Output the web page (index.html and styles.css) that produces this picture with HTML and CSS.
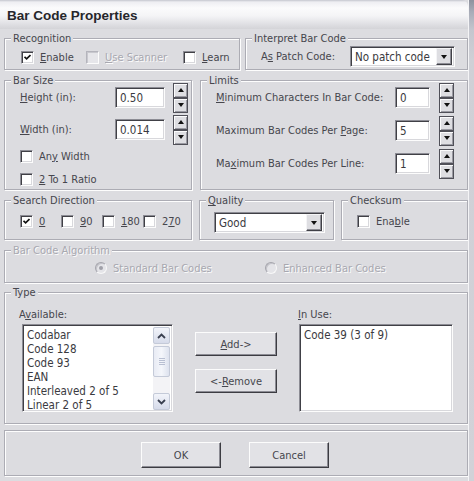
FILE: index.html
```html
<!DOCTYPE html>
<html>
<head>
<meta charset="utf-8">
<title>Bar Code Properties</title>
<link rel="stylesheet" href="styles.css">
</head>
<body>
<div class="window">
  <div class="main">
    <div class="titlebar"><span class="title">Bar Code Properties</span></div>
    <div class="client">

      <div class="row row1">
        <fieldset class="grp g-recog">
          <legend>Recognition</legend>
          <div class="body recog-body">
            <div class="chk w-enable"><span class="box"><svg viewBox="0 0 7 7" class="tick"><path d="M0.5 2.8 L2.6 4.9 L6.5 1"/></svg></span><span><u>E</u>nable</span></div>
            <div class="chk w-scan dis"><span class="box"></span><span class="dtext"><u>U</u>se Scanner</span></div>
            <div class="chk"><span class="box"></span><span><u>L</u>earn</span></div>
          </div>
        </fieldset>
        <fieldset class="grp g-interp">
          <legend>Interpret Bar Code</legend>
          <div class="body interp-body">
            <span class="flabel w-patch">A<u>s</u> Patch Code:</span>
            <div class="combo w-patchsel"><span class="ctext">No patch code</span><span class="dropbtn"></span></div>
          </div>
        </fieldset>
      </div>

      <div class="row row2">
        <fieldset class="grp g-barsize">
          <legend>Bar Size</legend>
          <div class="body barsize-body">
            <div class="frow">
              <span class="flabel w-bs"><u>H</u>eight (in):</span>
              <div class="edit w-bsedit">0.50</div>
              <div class="spin"><span class="sb up"></span><span class="sb dn"></span></div>
            </div>
            <div class="frow">
              <span class="flabel w-bs"><u>W</u>idth (in):</span>
              <div class="edit w-bsedit">0.014</div>
              <div class="spin"><span class="sb up"></span><span class="sb dn"></span></div>
            </div>
            <div class="chk crow first"><span class="box"></span><span>An<u>y</u> Width</span></div>
            <div class="chk crow"><span class="box"></span><span><u>2</u> To 1 Ratio</span></div>
          </div>
        </fieldset>
        <fieldset class="grp g-limits">
          <legend>Limits</legend>
          <div class="body limits-body">
            <div class="frow">
              <span class="flabel w-lim"><u>M</u>inimum Characters In Bar Code:</span>
              <div class="edit w-limedit">0</div>
              <div class="spin"><span class="sb up"></span><span class="sb dn"></span></div>
            </div>
            <div class="frow">
              <span class="flabel w-lim">Maximum Bar Codes Per <u>P</u>age:</span>
              <div class="edit w-limedit">5</div>
              <div class="spin"><span class="sb up"></span><span class="sb dn"></span></div>
            </div>
            <div class="frow">
              <span class="flabel w-lim">Ma<u>x</u>imum Bar Codes Per Line:</span>
              <div class="edit w-limedit">1</div>
              <div class="spin"><span class="sb up"></span><span class="sb dn"></span></div>
            </div>
          </div>
        </fieldset>
      </div>

      <div class="row row3">
        <fieldset class="grp g-search">
          <legend>Search Direction</legend>
          <div class="body search-body">
            <div class="chk w-dir"><span class="box"><svg viewBox="0 0 7 7" class="tick"><path d="M0.5 2.8 L2.6 4.9 L6.5 1"/></svg></span><span><u>0</u></span></div>
            <div class="chk w-dir"><span class="box"></span><span><u>9</u>0</span></div>
            <div class="chk w-dir"><span class="box"></span><span><u>1</u>80</span></div>
            <div class="chk"><span class="box"></span><span>2<u>7</u>0</span></div>
          </div>
        </fieldset>
        <fieldset class="grp g-quality">
          <legend><u>Q</u>uality</legend>
          <div class="body quality-body">
            <div class="combo w-qualsel"><span class="ctext">Good</span><span class="dropbtn"></span></div>
          </div>
        </fieldset>
        <fieldset class="grp g-check">
          <legend>Checksum</legend>
          <div class="body check-body">
            <div class="chk"><span class="box"></span><span>Ena<u>b</u>le</span></div>
          </div>
        </fieldset>
      </div>

      <div class="row row4">
        <fieldset class="grp g-algo">
          <legend class="dtext">Bar Code Algorithm</legend>
          <div class="body algo-body">
            <div class="radio w-std"><span class="rb on"></span><span class="dtext">Standard Bar Codes</span></div>
            <div class="radio"><span class="rb"></span><span class="dtext">Enhanced Bar Codes</span></div>
          </div>
        </fieldset>
      </div>

      <div class="row row5">
        <fieldset class="grp g-type">
          <legend>Type</legend>
          <div class="body type-body">
            <span class="tlabel avail">A<u>v</u>ailable:</span>
            <span></span>
            <span class="tlabel inuse"><u>I</u>n Use:</span>
            <div class="listbox">
              <div class="items">
                <div>Codabar</div>
                <div>Code 128</div>
                <div>Code 93</div>
                <div>EAN</div>
                <div>Interleaved 2 of 5</div>
                <div>Linear 2 of 5</div>
              </div>
              <div class="vscroll">
                <span class="sbtn"><svg viewBox="0 0 9 6" class="chev"><path d="M1 5 L4.5 1.5 L8 5"/></svg></span>
                <span class="thumb"><span class="grip"></span></span>
                <span class="track"></span>
                <span class="sbtn"><svg viewBox="0 0 9 6" class="chev"><path d="M1 1 L4.5 4.5 L8 1"/></svg></span>
              </div>
            </div>
            <div class="btncol">
              <div class="btn btn-sm"><span><u>A</u>dd-&gt;</span></div>
              <div class="btn btn-sm"><span>&lt;-<u>R</u>emove</span></div>
            </div>
            <div class="listbox">
              <div class="items"><div>Code 39 (3 of 9)</div></div>
            </div>
          </div>
        </fieldset>
      </div>

      <div class="row row6">
        <fieldset class="grp g-bottom">
          <div class="body bottom-body">
            <div class="btn btn-dlg"><span>OK</span></div>
            <div class="btn btn-dlg"><span>Cancel</span></div>
          </div>
        </fieldset>
      </div>

    </div>
  </div>
  <div class="frame-r"></div>
</div>
</body>
</html>
```

FILE: styles.css
```css
* { box-sizing: border-box; }
html, body { margin: 0; padding: 0; }
body {
  width: 474px;
  height: 481px;
  overflow: hidden;
  background: #dcdce0;
  font-family: "DejaVu Sans Condensed", "DejaVu Sans", sans-serif;
  font-stretch: condensed;
  font-size: 11px;
  color: #46464d;
}
u { text-decoration: underline; text-underline-offset: 1px; }

.window { display: flex; width: 474px; height: 481px; }
.main { width: 468px; height: 481px; display: flex; flex-direction: column; background: #dcdce0; }
.frame-r {
  width: 6px;
  height: 481px;
  border-left: 1px solid #f4f4f6;
  background: linear-gradient(#8e929e 0, #a8acb8 12px, #c4c6ce 30px, #cfd0d6 60px, #d2d2d8 100%);
}

.titlebar {
  height: 29px;
  display: flex;
  align-items: center;
  padding-left: 7px;
  padding-top: 2px;
  border-top-right-radius: 6px;
  background: linear-gradient(#c4c6ce 0, #eeeef2 2px, #fbfbfc 8px, #f4f4f6 16px, #e2e2e6 23px, #d4d4d8 29px);
}
.title { font-family: "Liberation Sans", Arial, sans-serif; font-weight: bold; font-size: 13.5px; color: #26262b; }

.client { display: flex; flex-direction: column; padding: 3px 0 0 4px; }

.row { display: flex; }
.row1 { height: 38px; gap: 5px; }
.row2 { height: 116px; gap: 8px; margin-top: 4px; }
.row3 { height: 46px; gap: 7px; margin-top: 4px; }
.row4 { height: 39px; margin-top: 4px; }
.row5 { height: 138px; margin-top: 3px; }
.row6 { height: 46px; margin-top: 6px; }

fieldset.grp {
  margin: 0;
  padding: 0;
  min-width: 0;
  border: 1px solid #acacb4;
  box-shadow: inset 1px 1px 0 #fdfdfd, 1px 1px 0 #fdfdfd;
}
legend {
  margin-left: 6px;
  padding: 0 2px;
  line-height: 13px;
  height: 13px;
  background: #dcdce0;
}

.g-recog { width: 236px; }
.g-interp { flex: 1; }
.g-barsize { width: 188px; }
.g-limits { flex: 1; }
.g-search { width: 188px; }
.g-quality { width: 135px; }
.g-check { flex: 1; }
.g-algo, .g-type, .g-bottom { flex: 1; }

.body { display: flex; }

/* checkbox */
.chk { display: flex; align-items: center; height: 16px; gap: 6px; white-space: nowrap; }
.box {
  width: 13px; height: 13px; flex: none;
  background: #fff;
  border: 1px solid;
  border-color: #8c8c94 #fcfcfc #fcfcfc #8c8c94;
  box-shadow: inset 1px 1px 0 #404046, inset -1px -1px 0 #d8d8dc;
  display: flex; align-items: center; justify-content: center;
}
.tick { width: 7px; height: 7px; }
.tick path { fill: none; stroke: #111; stroke-width: 1.7; }
.dis .box { background: #e6e6ea; border-color: #b4b4bc #fcfcfc #fcfcfc #b4b4bc; box-shadow: inset 1px 1px 0 #c8c8ce; }
.dtext { color: #a8a8b0; text-shadow: 1px 1px 0 #fbfbfb; }

.recog-body { padding: 4px 0 0 16px; }
.w-enable { width: 65px; }
.w-scan { width: 97px; }

.interp-body { padding: 1px 0 0 15px; align-items: center; }
.flabel { white-space: nowrap; }
.w-patch { width: 89px; }

/* combo */
.combo {
  height: 21px;
  background: #fff;
  border: 1px solid;
  border-color: #8c8c94 #fcfcfc #fcfcfc #8c8c94;
  box-shadow: inset 1px 1px 0 #404046, inset -1px -1px 0 #d8d8dc;
  display: flex; align-items: center;
  padding: 2px 2px 2px 4px;
}
.ctext { flex: 1; font-size: 11.5px; color: #3a3a40; }
.w-patchsel { width: 105px; }
.w-qualsel { width: 111px; }
.dropbtn {
  width: 16px; height: 17px; flex: none;
  background: #dedee2;
  border: 1px solid;
  border-color: #f4f4f6 #404046 #404046 #f4f4f6;
  box-shadow: inset -1px -1px 0 #8c8c94;
  display: flex; align-items: center; justify-content: center;
}
.dropbtn::before {
  content: "";
  border-left: 3.5px solid transparent;
  border-right: 3.5px solid transparent;
  border-top: 4px solid #111;
  margin-top: 1px;
}

/* edits and spinners */
.frow { display: flex; align-items: center; height: 21px; }
.edit {
  height: 21px;
  background: #fff;
  border: 1px solid;
  border-color: #8c8c94 #fcfcfc #fcfcfc #8c8c94;
  box-shadow: inset 1px 1px 0 #404046, inset -1px -1px 0 #d8d8dc;
  padding: 3px 0 0 4px;
  font-size: 11.5px;
  color: #3a3a40;
  line-height: 14px;
}
.spin { display: flex; flex-direction: column; flex: none; }
.sb {
  width: 15px; height: 15px;
  background: #dedee2;
  border: 1px solid #505058;
  box-shadow: inset 1px 1px 0 #fbfbfc, inset -1px -1px 0 #9a9aa2;
  display: flex; align-items: center; justify-content: center;
}
.sb.up::before {
  content: "";
  border-left: 3.5px solid transparent;
  border-right: 3.5px solid transparent;
  border-bottom: 4px solid #111;
}
.sb.dn::before {
  content: "";
  border-left: 3.5px solid transparent;
  border-right: 3.5px solid transparent;
  border-top: 4px solid #111;
}

.barsize-body { flex-direction: column; padding-left: 15px; }
.barsize-body .frow + .frow { margin-top: 11px; }
.w-bs { width: 95px; }
.w-bsedit { width: 50px; }
.barsize-body .spin { margin-left: 8px; }
.crow.first { margin-top: 8px; }
.crow + .crow { margin-top: 7px; }

.limits-body { flex-direction: column; padding-left: 15px; }
.limits-body .frow + .frow { margin-top: 12px; }
.w-lim { width: 179px; }
.w-limedit { width: 35px; }
.limits-body .spin { margin-left: 9px; }

.search-body { padding: 6px 0 0 15px; }
.w-dir { width: 41px; }
.quality-body { padding: 5px 0 0 14px; }
.check-body { padding: 6px 0 0 15px; }

/* radios */
.algo-body { padding: 3px 0 0 90px; }
.radio { display: flex; align-items: center; height: 16px; gap: 6px; white-space: nowrap; }
.w-std { width: 170px; }
.rb {
  width: 12px; height: 12px; flex: none;
  border-radius: 50%;
  border: 1px solid;
  border-color: #a4a4ac #f8f8f8 #f8f8f8 #a4a4ac;
  background: #e4e4e8;
  box-shadow: inset 1px 1px 0 #c4c4ca;
  display: flex; align-items: center; justify-content: center;
}
.rb.on::after { content: ""; width: 4px; height: 4px; border-radius: 50%; background: #a0a0a8; }

/* type group */
.type-body {
  display: grid;
  grid-template-columns: 151px 82px 154px;
  grid-template-rows: 13px 88px;
  column-gap: 22px;
  row-gap: 3px;
  padding: 9px 0 0 17px;
}
.type-body .inuse { margin-left: -1px; }
.tlabel { line-height: 13px; white-space: nowrap; }
.avail { margin-left: -3px; }
.listbox {
  background: #fff;
  border: 1px solid;
  border-color: #8c8c94 #fcfcfc #fcfcfc #8c8c94;
  box-shadow: inset 1px 1px 0 #404046, inset -1px -1px 0 #d8d8dc;
  display: flex;
  padding: 2px 1px 1px 2px;
}
.items { flex: 1; padding: 1px 0 0 2px; font-size: 11.5px; line-height: 14px; color: #3a3a40; white-space: nowrap; }
.vscroll {
  width: 17px; flex: none;
  display: flex; flex-direction: column;
  background: #f3f3f6;
  margin-right: 1px;
}
.sbtn {
  height: 17px; flex: none;
  border: 1px solid #c4cad8;
  border-radius: 2px;
  background: linear-gradient(#f2f4fa, #d6dbea);
  display: flex; align-items: center; justify-content: center;
}
.chev { width: 9px; height: 6px; }
.chev path { fill: none; stroke: #3a4050; stroke-width: 1.8; }
.thumb {
  height: 31px; margin-top: 2px; flex: none;
  border: 1px solid #c4cad8;
  border-radius: 2px;
  background: linear-gradient(90deg, #e8ebf4, #f4f6fb 50%, #dde2ee);
  display: flex; align-items: center; justify-content: center;
}
.grip {
  width: 6px; height: 7px;
  background: repeating-linear-gradient(#b8bfd2 0 1px, transparent 1px 2px);
}
.track { flex: 1; }

.btncol { display: flex; flex-direction: column; padding-top: 8px; gap: 13px; }
.btn {
  display: flex; align-items: center; justify-content: center;
  background: #e2e2e6;
  border: 1px solid;
  border-color: #fcfcfc #3c3c42 #3c3c42 #fcfcfc;
  box-shadow: inset -1px -1px 0 #8c8c94;
  color: #46464d;
  padding-top: 1px;
}
.btn-sm { width: 82px; height: 24px; }
.btn-dlg { width: 80px; height: 26px; }

.bottom-body { justify-content: center; gap: 28px; padding: 11px 0 0 0; margin-left: -2px; }
```
